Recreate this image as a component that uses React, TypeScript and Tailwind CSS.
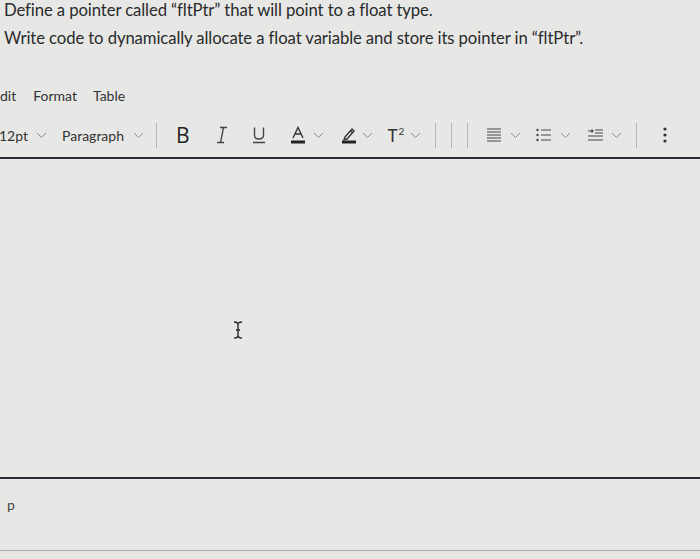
import React from "react";

const Chev = ({ cls = "" }: { cls?: string }) => (
  <svg width="11" height="7" viewBox="0 0 11 7" className={cls} fill="none" stroke="#8a8c8c" strokeWidth="1">
    <path d="M1 1 L5.5 5.5 L10 1" />
  </svg>
);

const Sep = ({ cls = "" }: { cls?: string }) => <div className={`w-px h-[25px] bg-[#b4b6b5] ${cls}`} />;

export default function App() {
  return (
    <div className="w-[700px] h-[559px] overflow-hidden bg-[#e7e8e6] text-[#2a2b2c] flex flex-col" style={{ fontFamily: "Lato, 'Open Sans', sans-serif" }}>
      <div className="pl-[4px] mt-[-4px] text-[16.7px] leading-[28px] tracking-[-0.1px]">
        <div>Define a pointer called “fltPtr” that will point to a float type.</div>
        <div>Write code to dynamically allocate a float variable and store its pointer in “fltPtr”.</div>
      </div>
      <div className="mt-[34px] flex items-center text-[14px] leading-[20px] text-[#333]">
        <span>dit</span>
        <span className="ml-[17px]">Format</span>
        <span className="ml-[16px]">Table</span>
      </div>
      <div className="mt-[14px] h-[30px] flex items-center text-[14px] text-[#333]">
        <span className="ml-[-1px]">12pt</span>
        <Chev cls="ml-[8px]" />
        <span className="ml-[15px]">Paragraph</span>
        <Chev cls="ml-[9px]" />
        <Sep cls="ml-[12px]" />
        <span className="ml-[19px] text-[21px] font-medium text-[#222] leading-none" style={{ fontFamily: "'Open Sans', sans-serif" }}>B</span>
        {/* Italic I */}
        <svg className="ml-[25px]" width="14" height="18" viewBox="0 0 14 18" fill="none" stroke="#444" strokeWidth="1.3">
          <path d="M5 1.5 H12 M2 16.5 H9 M8.5 1.5 L5.5 16.5" />
        </svg>
        {/* Underline U */}
        <svg className="ml-[23px]" width="14" height="18" viewBox="0 0 14 18" fill="none" stroke="#444" strokeWidth="1.4">
          <path d="M2.5 1.5 V9 Q2.5 13 7 13 Q11.5 13 11.5 9 V1.5 M1 16.5 H13" />
        </svg>
        {/* Text color A */}
        <svg className="ml-[24px]" width="16" height="18" viewBox="0 0 16 18" fill="none" stroke="#333" strokeWidth="1.4">
          <path d="M3 12 L8 1.5 L13 12 M5 8 H11" />
          <rect x="1" y="14.5" width="14" height="3" fill="#222" stroke="none" />
        </svg>
        <Chev cls="ml-[7px]" />
        {/* Highlight pen */}
        <svg className="ml-[17px]" width="16" height="18" viewBox="0 0 16 18" fill="none" stroke="#333" strokeWidth="1.4">
          <path d="M4 11 L11 3 L13 5 L6 13 L3 13.5 Z M9.5 4.7 L11.5 6.7" />
          <rect x="1" y="14.5" width="14" height="3" fill="#222" stroke="none" />
        </svg>
        <Chev cls="ml-[5px]" />
        {/* T superscript */}
        <span className="ml-[15px] text-[17px] text-[#333] leading-none">
          T<span className="text-[10px] relative top-[-7px] ml-[1px]">2</span>
        </span>
        <Chev cls="ml-[6px]" />
        <Sep cls="ml-[14px]" />
        <Sep cls="ml-[15px]" />
        <Sep cls="ml-[15px]" />
        {/* Align justify */}
        <svg className="ml-[18px]" width="16" height="14" viewBox="0 0 16 14" fill="none" stroke="#444" strokeWidth="1.2">
          <path d="M1 1 H15 M1 4 H15 M1 7 H15 M1 10 H15 M1 13 H15" />
        </svg>
        <Chev cls="ml-[8px]" />
        {/* Bullet list */}
        <svg className="ml-[15px]" width="16" height="14" viewBox="0 0 16 14" fill="none" stroke="#444" strokeWidth="1.2">
          <circle cx="1.5" cy="2" r="1.2" fill="#444" stroke="none" />
          <circle cx="1.5" cy="7" r="1.2" fill="#444" stroke="none" />
          <circle cx="1.5" cy="12" r="1.2" fill="#444" stroke="none" />
          <path d="M5 2 H15 M5 7 H15 M5 12 H15" />
        </svg>
        <Chev cls="ml-[8px]" />
        {/* Indent */}
        <svg className="ml-[16px]" width="17" height="14" viewBox="0 0 17 14" fill="none" stroke="#444" strokeWidth="1.2">
          <path d="M1 3 H6 M4.5 1.5 L6 3 L4.5 4.5 M8 2 H16 M8 5 H16 M1 8 H16 M1 12 H16" />
        </svg>
        <Chev cls="ml-[7px]" />
        <Sep cls="ml-[14px]" />
        {/* More dots */}
        <svg className="ml-[26px]" width="4" height="16" viewBox="0 0 4 16">
          <circle cx="2" cy="2" r="1.6" fill="#333" />
          <circle cx="2" cy="8" r="1.6" fill="#333" />
          <circle cx="2" cy="14" r="1.6" fill="#333" />
        </svg>
      </div>
      <div className="mt-[7px] h-[2px] bg-[#2b2b3a]" />
      <div className="h-[318px] flex items-start">
        <svg className="ml-[233px] mt-[162px]" width="10" height="18" viewBox="0 0 10 18" fill="none" stroke="#2a2a2a" strokeWidth="1.4">
          <path d="M1 1 Q5 1 5 3.5 Q5 1 9 1 M5 3.5 V14.5 M1 17 Q5 17 5 14.5 Q5 17 9 17 M3 9 H7" />
        </svg>
      </div>
      <div className="h-[2px] bg-[#2b2b3a]" />
      <div className="h-[71px] pl-[7px] pt-[16px] text-[14px] leading-[20px] text-[#444]">p</div>
      <div className="h-px bg-[#a9abab]" />
    </div>
  );
}
